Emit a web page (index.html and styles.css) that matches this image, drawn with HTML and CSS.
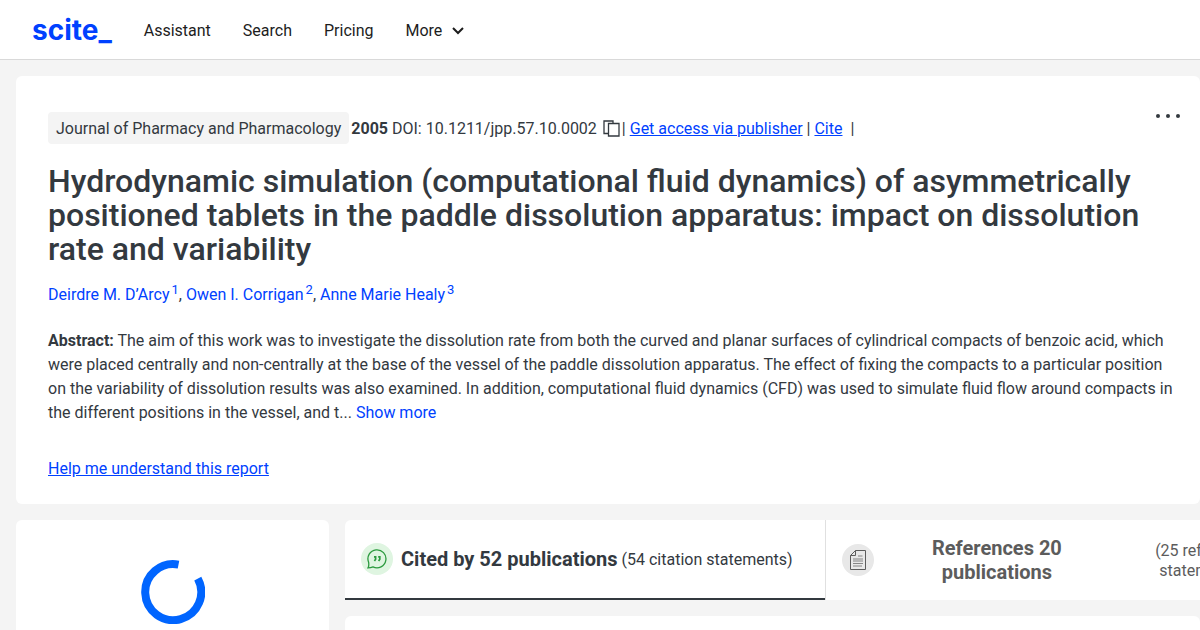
FILE: index.html
```
<!DOCTYPE html>
<html lang="en">
<head>
    <meta charset="UTF-8">
    <meta name="viewport" content="width=device-width, initial-scale=1.0">
    <title>Hydrodynamic simulation (computational fluid dynamics) - scite</title>
    <link rel="stylesheet" href="styles.css">
</head>
<body>

    <!-- Navbar -->
    <header class="navbar">
        <a class="logo" href="#">scite_</a>
        <nav class="nav-links">
            <a href="#">Assistant</a>
            <a href="#">Search</a>
            <a href="#">Pricing</a>
            <button type="button">More
                <svg width="12" height="8" viewBox="0 0 12 8" fill="none" stroke="currentColor" stroke-width="2" aria-hidden="true"><path d="M1 1l5 5 5-5"/></svg>
            </button>
        </nav>
    </header>

    <main class="page">
        <!-- Paper details -->
        <article class="card paper">
            <div class="paper-top">
                <div class="meta">
                    <span class="journal">Journal of Pharmacy and Pharmacology</span>
                    <span class="meta-text"><strong>2005</strong> DOI: 10.1211/jpp.57.10.0002</span>
                    <button class="copy" type="button" aria-label="Copy DOI">
                        <svg width="17" height="17" viewBox="0 0 17 17" fill="none" stroke="currentColor" stroke-width="1.3" aria-hidden="true"><path d="M5 13.5H1V1h9v2.5"/><path d="M5.5 3.5H16V16H5.5z"/></svg>
                    </button>
                    <span class="meta-text">| <a href="#">Get access via publisher</a> | <a href="#">Cite</a>&nbsp; |</span>
                </div>
                <button class="dots" type="button" aria-label="More actions">
                    <svg width="24" height="4" viewBox="0 0 24 4" fill="currentColor" aria-hidden="true"><circle cx="2" cy="2" r="2"/><circle cx="12" cy="2" r="2"/><circle cx="22" cy="2" r="2"/></svg>
                </button>
            </div>

            <h1>Hydrodynamic simulation (computational fluid dynamics) of asymmetrically positioned tablets in the paddle dissolution apparatus: impact on dissolution rate and variability</h1>

            <p class="authors"><a href="#">Deirdre M. D’Arcy<sup>1</sup></a>, <a href="#">Owen I. Corrigan<sup>2</sup></a>, <a href="#">Anne Marie Healy<sup>3</sup></a></p>

            <p class="abstract"><strong>Abstract:</strong> The aim of this work was to investigate the dissolution rate from both the curved and planar surfaces of cylindrical compacts of benzoic acid, which were placed centrally and non-centrally at the base of the vessel of the paddle dissolution apparatus. The effect of fixing the compacts to a particular position on the variability of dissolution results was also examined. In addition, computational fluid dynamics (CFD) was used to simulate fluid flow around compacts in the different positions in the vessel, and t... <button class="show-more" type="button">Show more</button></p>

            <a class="help" href="#">Help me understand this report</a>
        </article>

        <div class="columns">
            <!-- Sidebar, still loading -->
            <aside class="card sidebar">
                <svg class="spinner" width="64" height="64" viewBox="0 0 64 64" fill="none" stroke="#0065ff" stroke-width="8" role="img" aria-label="Loading"><path d="M56.8 18.7A28 28 0 1 1 37.5 4.6"/></svg>
            </aside>

            <div class="content">
                <div class="tabs">
                    <button class="tab active" type="button">
                        <span class="tab-icon green">
                            <svg width="20" height="20" viewBox="0 0 20 20" fill="none" stroke="currentColor" stroke-width="1.3" aria-hidden="true"><path d="M1 18.8c1-1.5 1-3 .6-5.6A9 9 0 1 1 6 17.9c-1.5.6-2.7.9-5 .9z"/><path d="M7 7.8h1.6v2.5L7.4 12M11.2 7.8h1.6v2.5L11.600 12" stroke-width="1.7"/></svg>
                        </span>
                        <span class="tab-title">Cited by 52 publications</span>
                        <span class="tab-sub">(54 citation statements)</span>
                    </button>
                    <button class="tab" type="button">
                        <span class="tab-icon">
                            <svg width="16" height="20" viewBox="0 0 16 20" fill="none" stroke="currentColor" aria-hidden="true"><path d="M5.5.5h10v19H.5v-14zM5.5.5v5h-5"/><path d="M8 6h4.500M3 9h10M3 11h10M3 13.500h10M3 16h9" stroke-width="1.2" opacity=".7"/></svg>
                        </span>
                        <span class="tab-title">References 20 publications</span>
                        <span class="tab-sub">(25 reference statements)</span>
                    </button>
                </div>
                <section class="card results"></section>
            </div>
        </div>
    </main>

</body>
</html>
```
FILE: styles.css
```
/* Basic styles */
* {
    box-sizing: border-box;
}

body {
    margin: 0;
    background-color: #f4f4f4;
    color: #33393f;
    font-family: Roboto, "Liberation Sans", sans-serif;
    font-size: 16px;
    line-height: 24px;
    overflow-x: hidden;
}

a {
    color: #0041ff;
}

button {
    padding: 0;
    border: none;
    background: none;
    color: inherit;
    font: inherit;
    cursor: pointer;
}

svg {
    display: block;
}

/* Navbar */
.navbar {
    display: flex;
    align-items: center;
    gap: 32px;
    height: 60px;
    padding: 0 32px;
    background-color: #fff;
    border-bottom: 1px solid #d9d9d9;
}

.logo {
    font-family: Inter, sans-serif;
    font-size: 28px;
    font-weight: 700;
    text-decoration: none;
}

.nav-links {
    display: flex;
    gap: 32px;
    padding-top: 2px;
    color: #1d1d1d;
}

.nav-links a {
    color: inherit;
    text-decoration: none;
}

.nav-links button {
    display: flex;
    align-items: center;
    gap: 10px;
}

/* Page */
.page {
    padding: 16px 0 0 16px;
}

.card {
    background-color: #fff;
    border-radius: 6px;
}

.paper {
    padding: 36px 20px 23px 32px;
}

.paper-top {
    display: flex;
    justify-content: space-between;
}

.meta {
    display: flex;
    align-items: center;
    gap: 2px;
}

.journal {
    padding: 5px 8px 3px;
    background-color: #f4f4f4;
    border-radius: 4px;
}

.meta-text {
    padding-top: 2px;
}

.copy {
    margin-left: 4px;
}

.dots {
    align-self: flex-start;
    padding: 2px 0;
}

h1 {
    margin: 20px 0 17px;
    font-size: 32px;
    line-height: 34px;
    font-weight: 500;
}

p {
    margin: 0;
}

.authors a,
.show-more {
    color: #0041ff;
    text-decoration: none;
}

.authors sup {
    font-size: 13px;
    line-height: 0;
    margin-left: 2px;
}

.abstract {
    margin: 22px 0 32px;
}

.help {
    display: inline-block;
}

/* Lower columns */
.columns {
    display: flex;
    gap: 16px;
    margin-top: 16px;
}

.sidebar {
    display: flex;
    justify-content: center;
    flex: 0 0 313px;
    padding: 40px 0;
}

.content {
    flex: 1;
    min-width: 0;
}

/* Tabs run past the right edge on narrow screens */
.tabs {
    display: flex;
    height: 80px;
}

.tab {
    display: flex;
    align-items: center;
    flex: 0 0 480px;
    padding: 0 16px;
    background-color: #fff;
    color: #5c5c5c;
    border-left: 1px solid #e0e0e0;
}

.tab.active {
    color: #33393f;
    border-left: none;
    border-bottom: 2px solid #33393f;
    border-radius: 6px 0 0 0;
}

.tab-icon {
    display: flex;
    align-items: center;
    justify-content: center;
    flex: 0 0 32px;
    height: 32px;
    margin-right: 8px;
    border-radius: 50%;
    background-color: #e8e8e8;
}

.tab-icon.green {
    background-color: #dff5e1;
    color: #2b9a3e;
}

.tab-title {
    font-size: 20px;
    font-weight: 700;
    margin-right: 4px;
}

.tab-sub {
    padding-top: 2px;
    line-height: 20px;
}

.results {
    min-height: 240px;
    margin-top: 16px;
}
```
